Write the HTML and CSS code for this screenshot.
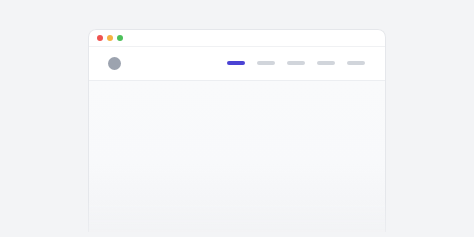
FILE: index.html
```html
<!DOCTYPE html>
<html lang="en">
<head>
    <meta charset="UTF-8">
    <meta name="viewport" content="width=device-width, initial-scale=1.0">
    <title>Browser mockup</title>
    <link rel="stylesheet" href="styles.css">
</head>
<body>
<div class="window">
    <div class="titlebar">
        <span class="dot red"></span>
        <span class="dot yellow"></span>
        <span class="dot green"></span>
    </div>
    <div class="nav">
        <div class="logo"></div>
        <div class="links">
            <span class="link active"></span>
            <span class="link"></span>
            <span class="link"></span>
            <span class="link"></span>
            <span class="link"></span>
        </div>
    </div>
    <div class="content"></div>
</div>
</body>
</html>
```

FILE: styles.css
```css
body {
    margin: 0;
    background-color: #f3f4f6;
    font-family: "Inter", sans-serif;
    display: flex;
    justify-content: center;
    padding-top: 29px;
    height: 237px;
    box-sizing: border-box;
    overflow: hidden;
}

.window {
    width: 298px;
    height: 203px;
    background: #fff;
    border: 1px solid #e5e7eb;
    border-bottom: none;
    border-radius: 8px 8px 0 0;
    box-shadow: 0 2px 10px rgba(0, 0, 0, 0.06);
    display: flex;
    flex-direction: column;
    box-sizing: border-box;
    -webkit-mask-image: linear-gradient(to bottom, #000 85%, rgba(0, 0, 0, 0.55) 100%);
    mask-image: linear-gradient(to bottom, #000 85%, rgba(0, 0, 0, 0.55) 100%);
}

.titlebar {
    height: 16px;
    display: flex;
    align-items: center;
    gap: 4px;
    padding-left: 8px;
    border-bottom: 1px solid #f0f1f3;
}

.dot {
    width: 6px;
    height: 6px;
    border-radius: 50%;
}

.red { background: #ef5350; }
.yellow { background: #f5b342; }
.green { background: #4cc05a; }

.nav {
    height: 33px;
    display: flex;
    align-items: center;
    justify-content: space-between;
    padding: 0 20px 0 19px;
    border-bottom: 1px solid #eceef1;
}

.logo {
    width: 13px;
    height: 13px;
    border-radius: 50%;
    background: #9ca3af;
}

.links {
    display: flex;
    gap: 11.5px;
    margin-top: -1px;
}

.link {
    width: 18.5px;
    height: 4px;
    border-radius: 2px;
    background: #d1d5db;
}

.link.active {
    background: #4b43d4;
}

.content {
    flex: 1;
    background: linear-gradient(to bottom, #f9fafb 0%, #f8f9fb 55%, #f2f3f5 100%);
}
```
